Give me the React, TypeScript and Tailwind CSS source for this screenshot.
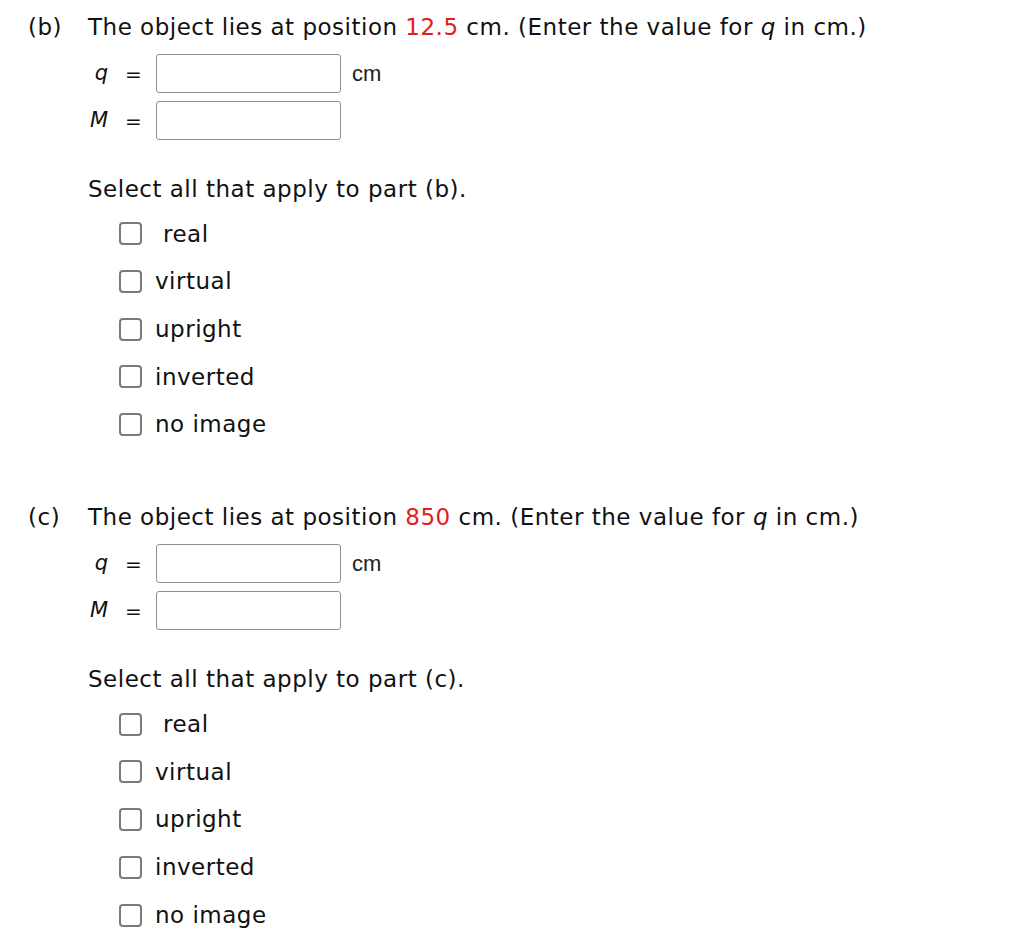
const options = ['real', 'virtual', 'upright', 'inverted', 'no image'];

function Part({ label, position }: { label: string; position: string }) {
  return (
    <div className="flex flex-col">
      <div className="flex items-center h-[36px]">
        <span className="w-[60px]">({label})</span>
        <span>
          The object lies at position <span className="text-[#e0201f]">{position}</span> cm. (Enter the value for{' '}
          <i>q</i> in cm.)
        </span>
      </div>
      <div className="mt-[9px] flex flex-col gap-[8px] pl-[56px]">
        {['q', 'M'].map((v) => (
          <div key={v} className="flex items-center h-[39px]">
            <i className="w-[24px] text-right text-[21px] tracking-normal">{v}</i>
            <span className="ml-[17px] w-[31px] text-[20px] tracking-normal">=</span>
            <div className="w-[185px] h-[39px] border border-[#8f8f8f] rounded-[3px] bg-white" />
            {v === 'q' && (
              <span className="ml-[11px] text-[22px] tracking-normal font-['Liberation_Sans',sans-serif] text-[#222]">cm</span>
            )}
          </div>
        ))}
      </div>
      <div className="mt-[31px] pl-[60px] h-[36px] flex items-center">Select all that apply to part ({label}).</div>
      <div className="flex flex-col pl-[91px] mt-[3px]">
        {options.map((o, i) => (
          <label key={o} className="flex items-center h-[47.7px]">
            <span className="w-[23px] h-[23px] border-2 border-[#7b7b7b] rounded-[4px] bg-white" />
            <span className={i === 0 ? 'ml-[21px]' : 'ml-[13px]'}>{o}</span>
          </label>
        ))}
      </div>
    </div>
  );
}

export default function App() {
  return (
    <div className="w-[1024px] h-[950px] bg-white text-[#111] text-[23px] tracking-[0.5px] font-['DejaVu_Sans',Verdana,sans-serif] pl-[28px] pt-[9px] overflow-hidden">
      <Part label="b" position="12.5" />
      <div className="mt-[51px]">
        <Part label="c" position="850" />
      </div>
    </div>
  );
}
